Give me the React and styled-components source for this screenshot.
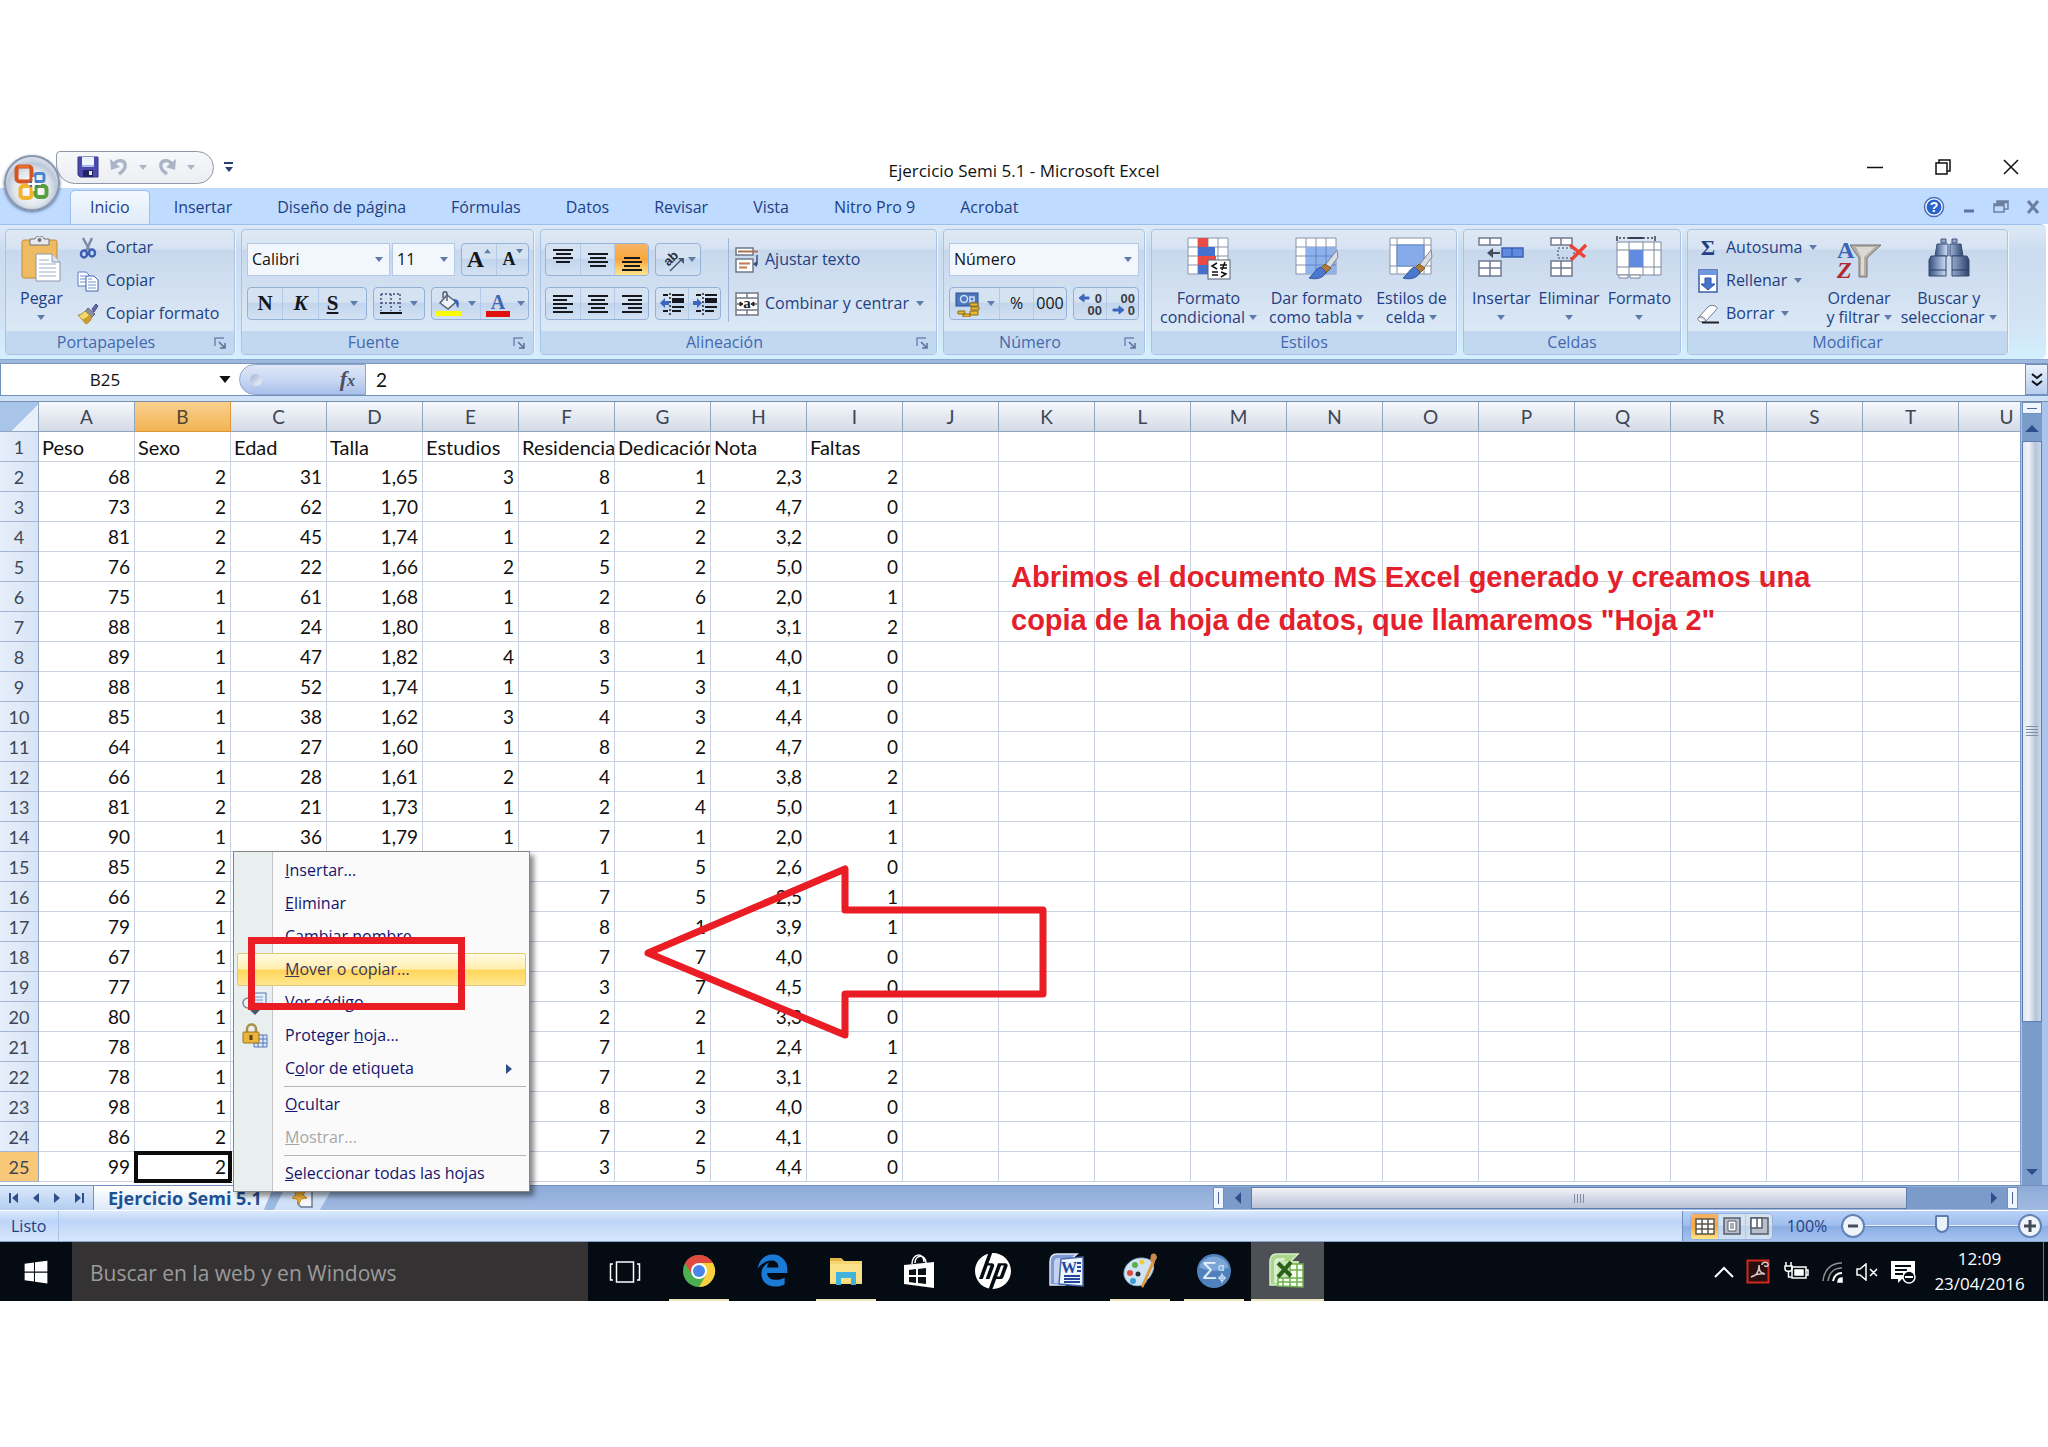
import React from "react";
import styled, { createGlobalStyle, css } from "styled-components";
import { FaEdgeLegacy, FaWindows } from "react-icons/fa";
import { SiHp } from "react-icons/si";

const COLUMNS = "ABCDEFGHIJKLMNOPQRSTU".split("");

const ROWS = [
  ["Peso", "Sexo", "Edad", "Talla", "Estudios", "Residencia", "Dedicación", "Nota", "Faltas"],
  ["68", "2", "31", "1,65", "3", "8", "1", "2,3", "2"],
  ["73", "2", "62", "1,70", "1", "1", "2", "4,7", "0"],
  ["81", "2", "45", "1,74", "1", "2", "2", "3,2", "0"],
  ["76", "2", "22", "1,66", "2", "5", "2", "5,0", "0"],
  ["75", "1", "61", "1,68", "1", "2", "6", "2,0", "1"],
  ["88", "1", "24", "1,80", "1", "8", "1", "3,1", "2"],
  ["89", "1", "47", "1,82", "4", "3", "1", "4,0", "0"],
  ["88", "1", "52", "1,74", "1", "5", "3", "4,1", "0"],
  ["85", "1", "38", "1,62", "3", "4", "3", "4,4", "0"],
  ["64", "1", "27", "1,60", "1", "8", "2", "4,7", "0"],
  ["66", "1", "28", "1,61", "2", "4", "1", "3,8", "2"],
  ["81", "2", "21", "1,73", "1", "2", "4", "5,0", "1"],
  ["90", "1", "36", "1,79", "1", "7", "1", "2,0", "1"],
  ["85", "2", "", "", "", "1", "5", "2,6", "0"],
  ["66", "2", "", "", "", "7", "5", "2,5", "1"],
  ["79", "1", "", "", "", "8", "1", "3,9", "1"],
  ["67", "1", "", "", "", "7", "7", "4,0", "0"],
  ["77", "1", "", "", "", "3", "7", "4,5", "0"],
  ["80", "1", "", "", "", "2", "2", "3,3", "0"],
  ["78", "1", "", "", "", "7", "1", "2,4", "1"],
  ["78", "1", "", "", "", "7", "2", "3,1", "2"],
  ["98", "1", "", "", "", "8", "3", "4,0", "0"],
  ["86", "2", "", "", "", "7", "2", "4,1", "0"],
  ["99", "2", "", "", "", "3", "5", "4,4", "0"]
];

const TABS = [
  "Inicio",
  "Insertar",
  "Diseño de página",
  "Fórmulas",
  "Datos",
  "Revisar",
  "Vista",
  "Nitro Pro 9",
  "Acrobat"
];

const UI_FONT = `"Open Sans", "Noto Sans", sans-serif`;
const CELL_FONT = `Lato, "Open Sans", sans-serif`;

/* ---------- icons ---------- */

const Caret = ({ color = "#5f7ba8", size = 8 }) => (
  <svg width={size} height={size / 2 + 1} viewBox="0 0 8 5" aria-hidden="true">
    <path d="M0 0h8L4 5z" fill={color} />
  </svg>
);

const OfficeLogo = () => (
  <svg width="36" height="38" viewBox="0 0 36 38" fill="none" aria-hidden="true">
    <rect x="2.500" y="2.500" width="15" height="15" rx="3" stroke="#d8531e" strokeWidth="4" />
    <path d="M4 2.500h11" stroke="#e8772e" strokeWidth="2" />
    <rect x="21" y="9.500" width="9" height="8" rx="2" stroke="#4a86d0" strokeWidth="3" />
    <rect x="6.500" y="22" width="11" height="12" rx="3" stroke="#f3b42c" strokeWidth="4" />
    <rect x="21.500" y="22" width="11" height="11" rx="3" stroke="#5a9e3c" strokeWidth="4" />
    <path d="M14 20h13M19.500 13v14" stroke="#fff" strokeWidth="2" />
    <path d="M16 18h2M22 18h2M16 22h2M22 22h2" stroke="#4469a8" strokeWidth="2" />
  </svg>
);

const SaveIcon = () => (
  <svg width="22" height="22" viewBox="0 0 22 22" aria-hidden="true">
    <path d="M1 1h20v20H3l-2-2z" fill="#4a49ad" stroke="#34348c" />
    <rect x="5" y="1" width="12" height="10" fill="#eef2fb" />
    <path d="M5 9h12v2H5z" fill="#a9bbe8" />
    <rect x="6" y="14" width="10" height="7" fill="#22225e" />
    <rect x="12" y="15" width="3" height="4" fill="#e6e8f5" />
  </svg>
);

const UndoIcon = ({ flip }) => (
  <svg width="20" height="20" viewBox="0 0 20 20" fill="none" aria-hidden="true">
    <g transform={flip ? "translate(20 0) scale(-1 1)" : undefined}>
      <path d="M5 8C8 1 18 3 16 10c-.6 3-3 5-6 7" stroke="#a9b4c6" strokeWidth="3.500" />
      <path d="M1 2l1 11 9-3z" fill="#a9b4c6" />
    </g>
  </svg>
);

const PasteIcon = () => (
  <svg width="42" height="46" viewBox="0 0 42 46" aria-hidden="true">
    <rect x="2" y="4" width="35" height="38" rx="2" fill="#eebb62" stroke="#c08e3d" />
    <path d="M10 3h5c0-4 9-4 9 0h5v6H10z" fill="#e8eaee" stroke="#6d7480" />
    <circle cx="19.500" cy="4" r="2" fill="#6d7480" />
    <path d="M16 18h16l8 8v19H16z" fill="#fff" stroke="#8d97a8" />
    <path d="M32 18v8h8" fill="#dde5f2" stroke="#8d97a8" />
    <path d="M19 24h10M19 28h17M19 32h17M19 36h17M19 40h17" stroke="#9fb0cc" />
  </svg>
);

const CutIcon = () => (
  <svg width="22" height="22" viewBox="0 0 22 22" fill="none" aria-hidden="true">
    <path d="M6 1l7 13M15 1L9 14" stroke="#7d8ba3" strokeWidth="2.500" />
    <ellipse cx="7" cy="17" rx="3" ry="3.500" stroke="#3c5fb4" strokeWidth="2.500" />
    <ellipse cx="15" cy="16" rx="3" ry="3.500" stroke="#3c5fb4" strokeWidth="2.500" />
  </svg>
);

const CopyIcon = () => (
  <svg width="22" height="22" viewBox="0 0 22 22" aria-hidden="true">
    <path d="M1 2h8l3 3v11H1z" fill="#fff" stroke="#5a7fc0" />
    <path d="M3 6h6M3 9h6M3 12h6" stroke="#6f93d2" />
    <path d="M9 6h8l4 4v11H9z" fill="#fff" stroke="#3f63ae" />
    <path d="M11 12h8M11 15h8M11 18h8M11 9h4" stroke="#6f93d2" />
  </svg>
);

const BrushIcon = () => (
  <svg width="22" height="22" viewBox="0 0 22 22" aria-hidden="true">
    <path d="M15 6l4-5 2 2-4 6z" fill="#6269a8" stroke="#454b86" />
    <path d="M11 5l7 6-3 3-7-5z" fill="#8b8fa8" stroke="#5b5f7c" />
    <path d="M8 8l7 6c-1 4-4 6-6 7L1 12c3 0 5-2 7-4z" fill="#f4d86e" stroke="#a98b2f" />
    <path d="M9 21l-4-5c3 0 5-2 7-4l3 2c-1 4-4 6-6 7z" fill="#c99b35" />
  </svg>
);

const BordersIcon = () => (
  <svg width="22" height="22" viewBox="0 0 22 22" aria-hidden="true">
    <path
      d="M1 1h20M1 10h20M1 1v17M11 1v17M20 1v17"
      stroke="#41507a"
      strokeWidth="1.500"
      strokeDasharray="2 2"
      fill="none"
    />
    <path d="M0 20h22" stroke="#111" strokeWidth="2" />
  </svg>
);

const FillIcon = () => (
  <svg width="26" height="26" viewBox="0 0 26 26" aria-hidden="true">
    <path d="M11 4l9 7-8 7-8-6z" fill="#eef3fa" stroke="#59616f" strokeWidth="1.500" />
    <path d="M11 10V3c0-3-4-3-4 0v4" fill="none" stroke="#59616f" strokeWidth="1.500" />
    <path d="M18 8c5 0 6 4 4 9-2-1-1-5-4-6z" fill="#3e64b8" />
    <rect x="0" y="20" width="25" height="5" fill="#fbfb00" />
  </svg>
);

const FontColorIcon = () => (
  <svg width="26" height="26" viewBox="0 0 26 26" aria-hidden="true">
    <text x="13" y="18" textAnchor="middle" fontFamily="Liberation Serif" fontWeight="700" fontSize="20" fill="#4565b0">
      A
    </text>
    <rect x="1" y="20" width="24" height="6" fill="#e01010" />
  </svg>
);

const LinesIcon = ({ lines, height = 20 }) => (
  <svg width="22" height={height} viewBox={`0 0 22 ${height}`} aria-hidden="true">
    {lines.map(([x, y, w]) => (
      <rect key={y} x={x} y={y} width={w} height="2" fill="#16181d" />
    ))}
  </svg>
);

const alignTop = [[1, 0, 20], [4, 4, 15], [1, 8, 20], [4, 12, 14]];
const alignMiddle = [[1, 4, 20], [3, 8, 16], [1, 12, 20], [3, 16, 16]];
const alignBottom = [[3, 8, 16], [1, 12, 20], [3, 16, 16], [1, 20, 20]];
const paragraph = (xs) => xs.map(([x, w], i) => [x, i * 4, w]);
const alignLeft = paragraph([[1, 20], [1, 14], [1, 20], [1, 14], [1, 20]]);
const alignCenter = paragraph([[1, 20], [4, 14], [1, 20], [4, 14], [1, 20]]);
const alignRight = paragraph([[1, 20], [7, 14], [1, 20], [7, 14], [1, 20]]);

const OrientationIcon = () => (
  <svg width="26" height="26" viewBox="0 0 26 26" aria-hidden="true">
    <text
      x="1"
      y="14"
      transform="translate(3 1) rotate(-45 9 11)"
      fontFamily="Liberation Sans"
      fontWeight="700"
      fontSize="13"
      fill="#2c2f38"
    >
      ab
    </text>
    <path d="M10 24L22 12" stroke="#4d5568" strokeWidth="1.500" />
    <path d="M18 11h6v6z" fill="#4d5568" />
  </svg>
);

const IndentIcon = ({ right }) => (
  <svg width="24" height="22" viewBox="0 0 24 22" aria-hidden="true">
    <path d="M10 0v22" stroke="#222" strokeWidth="1.500" strokeDasharray="2 2" />
    <path d="M3 2h5M12 2h12M3 18h5M12 18h9M12 14h12" stroke="#16181d" strokeWidth="2" />
    <path d="M12 5h12v5H12z" fill="#16181d" />
    <path d={right ? "M9 10L4 5v3H0v4h4v3z" : "M0 10l5-5v3h4v4H5v3z"} fill="#3f66bf" />
  </svg>
);

const WrapIcon = () => (
  <svg width="24" height="26" viewBox="0 0 24 26" aria-hidden="true">
    <rect x="1" y="1" width="17" height="7" fill="#fff" stroke="#6f7787" strokeWidth="1.500" />
    <path d="M3 4.500h20" stroke="#a8745a" strokeWidth="2" />
    <rect x="1" y="12" width="17" height="13" fill="#fff" stroke="#6f7787" strokeWidth="1.500" />
    <path d="M4 16.500h11M4 20.500h8" stroke="#c47a4f" strokeWidth="2" />
    <path d="M22 8v9h-3" stroke="#3a4d80" fill="none" strokeWidth="1.500" />
    <path d="M18 17l4-3v6z" fill="#3a4d80" />
  </svg>
);

const MergeIcon = () => (
  <svg width="24" height="24" viewBox="0 0 24 24" aria-hidden="true">
    <path d="M1 1h22v22H1zM1 6h22M1 18h22M12 1v5M12 18v5" fill="#fff" stroke="#6f7787" strokeWidth="1.500" />
    <text x="12" y="16" textAnchor="middle" fontFamily="Liberation Serif" fontWeight="700" fontSize="15" fill="#222">
      a
    </text>
    <path d="M2 12h5M22 12h-5M5 10l3 2-3 2zM19 10l-3 2 3 2z" stroke="#222" fill="#222" />
  </svg>
);

const CurrencyIcon = () => (
  <svg width="26" height="26" viewBox="0 0 26 26" aria-hidden="true">
    <rect x="1" y="2" width="22" height="13" fill="#4d76bd" stroke="#2f4f92" />
    <circle cx="9" cy="8" r="3.500" fill="none" stroke="#cfe0f8" strokeWidth="1.500" />
    <path d="M15 12V6h4v4h-4" fill="none" stroke="#cfe0f8" strokeWidth="1.500" />
    <path d="M15 12h8v3h-8zM16 16h8v3h-8zM15 20h8v4h-8zM3 20h7v3H3zM8 23h7v3H8z" fill="#e9b832" stroke="#8f6a14" />
  </svg>
);

const DecimalIcon = ({ more }) => (
  <svg width="26" height="26" viewBox="0 0 26 26" aria-hidden="true">
    <g fontFamily="Liberation Sans" fontWeight="700" fontSize="13" fill="#3a3d45" textAnchor="end">
      <text x="25" y="12">{more ? "0" : "00"}</text>
      <text x="25" y="24">{more ? "00" : "0"}</text>
    </g>
    <path
      d={more ? "M2 7l5-4v3h5v2H7v3z" : "M14 19l-5-4v3H3v2h6v3z"}
      fill="#3f66bf"
      stroke="#3f66bf"
    />
  </svg>
);

const GridBase = ({ fill }) => (
  <path d="M2 2h40v36H2zM12 2v36M22 2v36M32 2v36M2 11h40M2 20h40M2 29h40" fill={fill || "#fff"} stroke="#8893a8" />
);

const PaintBrush = () => (
  <g>
    <path d="M43 14L28 33l5 3 11-15z" fill="#d9dce2" stroke="#7f8592" />
    <path d="M31 28l-5 5 5 5 6-6z" fill="#b07b35" stroke="#7b541f" />
    <path d="M27 31c-5 1-7 7-12 11 7 2 15 0 17-6z" fill="#4a78cc" stroke="#3158a4" />
  </g>
);

const ConditionalIcon = () => (
  <svg width="46" height="44" viewBox="0 0 46 44" aria-hidden="true">
    <GridBase />
    <path d="M12 2h10v9H12zM12 20h18v9H12z" fill="#ea4b45" />
    <path d="M12 11h17v9H12zM12 29h10v9H12z" fill="#4471cc" />
    <rect x="22" y="24" width="22" height="19" fill="#fff" stroke="#596273" />
    <path d="M31 27l-5 3 5 3M26 36h6M26 39h6M34 29h7M34 32h7M39 26l-3 8M35 36l5 2-5 3" fill="none" stroke="#111" strokeWidth="1.500" />
  </svg>
);

const TableFormatIcon = () => (
  <svg width="46" height="44" viewBox="0 0 46 44" aria-hidden="true">
    <GridBase />
    <path d="M12 11h30v27H12z" fill="#8fb2ea" />
    <path d="M22 11v27M32 11v27M12 20h30M12 29h30" stroke="#5f86cc" />
    <PaintBrush />
  </svg>
);

const CellStylesIcon = () => (
  <svg width="46" height="44" viewBox="0 0 46 44" aria-hidden="true">
    <path d="M2 2h41v36H2zM9 2v36M36 2v36M2 9h41M2 30h41" fill="#fff" stroke="#8893a8" />
    <path d="M9 9h27v21H9z" fill="#86abe8" stroke="#5f86cc" />
    <PaintBrush />
  </svg>
);

const InsertCellsIcon = () => (
  <svg width="46" height="44" viewBox="0 0 46 44" aria-hidden="true">
    <path d="M1 2h22v7H1zM12 2v7M1 25h22v15H1zM12 25v15M1 32h22" fill="#fff" stroke="#6f7a90" strokeWidth="1.500" />
    <path d="M24 12h21v9H24zM34 12v9" fill="#5f8ae0" stroke="#3b62b4" strokeWidth="1.500" />
    <path d="M11 17h11" stroke="#444c5e" strokeWidth="2" />
    <path d="M9 17l6-5v10z" fill="#444c5e" />
  </svg>
);

const DeleteCellsIcon = () => (
  <svg width="40" height="44" viewBox="0 0 40 44" aria-hidden="true">
    <path d="M2 2h21v7H2zM12 2v7M2 25h21v15H2zM12 25v15M2 32h21" fill="#fff" stroke="#6f7a90" strokeWidth="1.500" />
    <path d="M9 12h16v10H9z" fill="none" stroke="#333d52" strokeDasharray="2 2" />
    <path d="M21 9l15 12M37 9L22 24" stroke="#ea4335" strokeWidth="3.500" />
  </svg>
);

const FormatCellsIcon = () => (
  <svg width="46" height="44" viewBox="0 0 46 44" aria-hidden="true">
    <path d="M1 0v5M39 0v5" stroke="#333d52" strokeWidth="1.500" />
    <path d="M3 2h36" stroke="#333d52" strokeWidth="1.500" strokeDasharray="2 2" />
    <path d="M13 2h14" stroke="#333d52" strokeWidth="2" />
    <path d="M1 6h44v33H1zM13 6v33M27 6v33M38 6v33M1 14h44M1 31h44" fill="#fff" stroke="#7c879c" />
    <path d="M13 14h14v17H13z" fill="#5f8ae0" />
    <path d="M3 39h9v3H3zM14 39h10v3H14z" fill="#fff" stroke="#7c879c" />
  </svg>
);

const FillDownIcon = () => (
  <svg width="20" height="24" viewBox="0 0 20 24" aria-hidden="true">
    <rect x="1" y="1" width="18" height="22" fill="#fff" stroke="#3c5fa8" strokeWidth="1.500" />
    <rect x="1" y="1" width="18" height="5" fill="#6f97dc" />
    <path d="M7 9h6v6h4l-7 6-7-6h4z" fill="#4773cc" stroke="#2c51a0" />
  </svg>
);

const EraserIcon = () => (
  <svg width="22" height="20" viewBox="0 0 22 20" aria-hidden="true">
    <path d="M1 14L11 3c2-2 4-2 7-1s2 3 1 4L9 17c-2 2-9 1-8-3z" fill="#fff" stroke="#6f7a90" />
    <path d="M1 14c2-2 6-2 8 3" fill="#d6dbe6" stroke="#6f7a90" />
    <path d="M5 18.500h17" stroke="#222" strokeWidth="2" />
  </svg>
);

const SortIcon = () => (
  <svg width="46" height="46" viewBox="0 0 46 46" aria-hidden="true">
    <path d="M14 9h31L31 22v19h-8V22z" fill="#b3aea6" stroke="#77736d" />
    <path d="M20 11h19L28 21v18h-3V21z" fill="#dcd9d3" />
    <g fontFamily="Liberation Serif" fontWeight="700" fontSize="24">
      <text x="1" y="22" fill="#3a62b8">A</text>
      <text x="1" y="42" fill="#b02a30" fontStyle="italic">Z</text>
    </g>
  </svg>
);

const FindIcon = () => (
  <svg width="44" height="46" viewBox="0 0 44 46" aria-hidden="true">
    <defs>
      <linearGradient id="lens" x1="0" x2="1">
        <stop offset="0" stopColor="#35507f" />
        <stop offset=".4" stopColor="#c4d4ee" />
        <stop offset="1" stopColor="#2b4370" />
      </linearGradient>
    </defs>
    <path d="M14 3h5v4h-5zM25 3h5v4h-5z" fill="#8ea3c6" stroke="#47597c" />
    <path d="M10 8h11v12H8zM23 8h11l2 12H23z" fill="url(#lens)" stroke="#3a5078" />
    <path d="M4 20h15v20H2V24zM25 20h15l2 4v16H25z" fill="url(#lens)" stroke="#33486e" />
    <path d="M3 34h16M25 34h17" stroke="#2c3f63" />
  </svg>
);

const LauncherIcon = () => (
  <svg width="12" height="12" viewBox="0 0 12 12" aria-hidden="true">
    <path d="M1 9V1h9" fill="none" stroke="#6c87b5" strokeWidth="1.500" />
    <path d="M5 5l5 5M11 6v5H6" fill="none" stroke="#5a6f96" strokeWidth="1.500" />
  </svg>
);

const HelpIcon = () => (
  <svg width="22" height="22" viewBox="0 0 22 22" aria-hidden="true">
    <circle cx="11" cy="11" r="9.500" fill="#fff" stroke="#4a6fb8" strokeWidth="1.500" />
    <circle cx="11" cy="11" r="7.500" fill="#2c62cc" />
    <text x="11" y="16" textAnchor="middle" fontFamily="Liberation Sans" fontWeight="700" fontSize="14" fill="#fff">
      ?
    </text>
  </svg>
);

const LockSheetIcon = () => (
  <svg width="26" height="26" viewBox="0 0 26 26" aria-hidden="true">
    <path d="M12 12h13v12H12zM12 16h13M12 20h13M16 12v12M21 12v12" fill="#dbe7f9" stroke="#5676b4" />
    <path d="M5 9V6c0-6 9-6 9 0v3" fill="none" stroke="#a99049" strokeWidth="2.500" />
    <rect x="1" y="9" width="16" height="11" rx="1" fill="#e9b53c" stroke="#9a7420" />
    <path d="M9 12v5" stroke="#5b4310" strokeWidth="3" />
  </svg>
);

const CodeIcon = () => (
  <svg width="26" height="26" viewBox="0 0 26 26" aria-hidden="true">
    <rect x="7" y="3" width="17" height="13" fill="#e7effb" stroke="#5676b4" />
    <path d="M13 7h8M13 10h8M13 13h8" stroke="#7b93c4" />
    <circle cx="6" cy="13" r="5" fill="#eef1f6" stroke="#7d8798" strokeWidth="1.500" />
    <path d="M8 20l6-4 4 4-5 5z" fill="#4b566c" />
  </svg>
);

const NewSheetIcon = () => (
  <svg width="24" height="22" viewBox="0 0 24 22" aria-hidden="true">
    <path d="M6 4h14v16H9l-3-3z" fill="#f6f8fc" stroke="#6b7892" strokeWidth="1.500" />
    <path d="M7 1l2 4 5-2-3 5 4 3-6 1-2 5-2-5-5-1 4-3-2-5 4 2z" fill="#f0b33a" stroke="#c68a1d" />
  </svg>
);

const ChromeIcon = () => (
  <svg width="34" height="34" viewBox="0 0 34 34" aria-hidden="true">
    <circle cx="17" cy="17" r="16" fill="#4caf50" />
    <path d="M3.100 9A16 16 0 0 1 30.900 9L17 9.500 10 21z" fill="#e04a3f" />
    <path d="M30.900 9A16 16 0 0 1 17 33l7-12-7-12z" fill="#fbce3c" />
    <circle cx="17" cy="17" r="8" fill="#fff" />
    <circle cx="17" cy="17" r="6" fill="#4a86e8" />
  </svg>
);

const ExplorerIcon = () => (
  <svg width="34" height="30" viewBox="0 0 34 30" aria-hidden="true">
    <path d="M1 2h11l3 3h18v23H1z" fill="#f6d673" />
    <path d="M1 2h11l3 3H1z" fill="#e3b64a" />
    <path d="M1 8h32v18H1z" fill="#fbe08a" />
    <path d="M7 16h20v13h-5v-7h-10v7H7z" fill="#3fb3dd" />
  </svg>
);

const StoreIcon = () => (
  <svg width="34" height="36" viewBox="0 0 34 36" aria-hidden="true">
    <path d="M2 12l30-3v26L2 31z" fill="#fff" />
    <path d="M10 11C10 0 22-1 22 9M13 10c0-9 11-9 11 0" fill="none" stroke="#fff" strokeWidth="1.500" />
    <path d="M7 17l7-1v6H7zM16 16l8-1v7h-8zM7 24h7v6l-7-1zM16 24h8v7l-8-1z" fill="#0b1016" />
  </svg>
);

const WordIcon = () => (
  <svg width="36" height="36" viewBox="0 0 36 36" aria-hidden="true">
    <path d="M1 32V9c0-5 2-8 7-8h20l-7 6-5 25z" fill="#7f9bd6" stroke="#dfe8f8" strokeWidth="1.500" />
    <path d="M5 30V11c0-4 1-6 5-6h8l-7 25z" fill="#c3d2f0" />
    <path d="M12 6l22-2v29l-24-2z" fill="#f1f5fc" stroke="#4a6bb0" strokeWidth="1.500" />
    <text x="12" y="20" fontFamily="Liberation Serif" fontWeight="700" fontSize="16" fill="#23479b">
      W
    </text>
    <path d="M15 23h16M15 26h16M15 29h16M28 10h4M28 14h4M28 18h4" stroke="#23479b" strokeWidth="2" />
  </svg>
);

const PaintIcon = () => (
  <svg width="36" height="36" viewBox="0 0 36 36" aria-hidden="true">
    <path d="M2 22C1 12 11 4 21 5s13 7 9 15-4 4-6 9-19 7-22-7z" fill="#cfe3f3" stroke="#8fb0cb" />
    <circle cx="8" cy="20" r="3" fill="#df4e3c" />
    <circle cx="13" cy="12" r="3" fill="#5fae4d" />
    <circle cx="20" cy="9" r="2.500" fill="#f0ca3d" />
    <circle cx="11" cy="28" r="3" fill="#3c9fd4" />
    <circle cx="16" cy="21" r="2.500" fill="#26313d" />
    <path d="M30 8l3 1-12 26-2-2z" fill="#e09b45" />
    <path d="M29 2c3-3 6-1 6 3l-3 5-4-2z" fill="#c98a4b" />
  </svg>
);

const SpssIcon = () => (
  <svg width="36" height="36" viewBox="0 0 36 36" aria-hidden="true">
    <circle cx="18" cy="18" r="17" fill="#4f82bd" />
    <path d="M3 14a16 16 0 0 1 30 0c-9 5-20 5-30 0z" fill="#7ba6d5" />
    <g fill="#e3eefa" fontFamily="Liberation Sans">
      <text x="6" y="26" fontSize="24">Σ</text>
      <text x="22" y="18" fontSize="11">α</text>
    </g>
    <circle cx="26" cy="25" r="2.500" fill="none" stroke="#e3eefa" />
    <path d="M26 20v10M22 25h8" stroke="#e3eefa" />
  </svg>
);

const ExcelIcon = () => (
  <svg width="36" height="36" viewBox="0 0 36 36" aria-hidden="true">
    <path d="M1 32V9c0-5 2-8 7-8h21l-6 6-9 25z" fill="#a8d68c" stroke="#d8efc9" strokeWidth="1.500" />
    <path d="M5 30V11c0-4 1-6 5-6h6L9 30z" fill="#d9efcb" />
    <path d="M10 8h20l-2 16H8z" fill="#c7e6b4" />
    <path d="M21 11h13v23l-25-1v-8h12zM21 17h13M21 25h13M9 29h25M28 11v23M21 25v9M14 25v8" fill="#f7fcf3" stroke="#6db04c" strokeWidth="1.500" />
    <path d="M9 10l13 13M22 9L9 24" stroke="#2c5e1c" strokeWidth="4" />
  </svg>
);

const TaskViewIcon = () => (
  <svg width="32" height="24" viewBox="0 0 32 24" fill="none" stroke="#fff" strokeWidth="1.500" aria-hidden="true">
    <rect x="7.500" y="2" width="17" height="20" />
    <path d="M4 4H1.500v16H4M28 4h2.500v16H28" />
  </svg>
);

/* ---------- base ---------- */

const GlobalStyle = createGlobalStyle`
  * {
    box-sizing: border-box;
  }

  body {
    margin: 0;
    background: #fff;
    font-family: ${UI_FONT};
    font-size: 16px;
    line-height: 19px;
    color: #1e3f83;
  }

  button, input, select {
    margin: 0;
    padding: 0;
    border: none;
    background: none;
    border-radius: 0;
    font: inherit;
    color: inherit;
    outline: none;
  }

  svg {
    display: block;
    flex: none;
  }
`;

const Page = styled.div`
  padding: 146px 0;
`;

const Window = styled.main`
  position: relative;
  display: flex;
  flex-direction: column;
`;

/* ---------- title bar ---------- */

const TitleBar = styled.header`
  display: grid;
  grid-template-columns: 1fr auto 1fr;
  align-items: center;
  height: 42px;
`;

const QuickAccess = styled.div`
  display: flex;
  align-items: center;
  gap: 10px;
  margin-left: 56px;
`;

const QuickPill = styled.div`
  display: flex;
  align-items: center;
  gap: 10px;
  height: 33px;
  width: 158px;
  padding-left: 20px;
  border: 1px solid #8d97a6;
  border-radius: 4px 17px 17px 20px;
  background: linear-gradient(#f7f8fa, #eceef2);
`;

const IconButton = styled.button`
  display: flex;
  align-items: center;
  justify-content: center;
`;

const CustomizeBar = styled(IconButton)`
  flex-direction: column;
  gap: 3px;

  &::before {
    content: "";
    width: 9px;
    height: 2px;
    background: #27406f;
  }
`;

const Title = styled.h1`
  margin: 0;
  font-size: 17px;
  font-weight: 400;
  color: #111;
  padding-top: 6px;
`;

const WindowControls = styled.div`
  display: flex;
  justify-content: flex-end;
  padding-right: 3px;

  button {
    width: 68px;
    height: 40px;
  }
`;

const OfficeButton = styled.button`
  position: absolute;
  left: 4px;
  top: 9px;
  width: 56px;
  height: 56px;
  display: flex;
  align-items: center;
  justify-content: center;
  border: 2px solid #8797ae;
  border-radius: 50%;
  background: radial-gradient(circle at 50% 60%, #fff 10%, #dfe4ec 45%, #bcc8da 60%, #f6f8fb 90%);
  box-shadow: 0 1px 3px #51688f;
`;

/* ---------- ribbon ---------- */

const TabBar = styled.nav`
  display: flex;
  align-items: flex-end;
  gap: 1px;
  height: 36px;
  padding-left: 70px;
  background: #bfdbff;
`;

const RibbonTab = styled.button`
  height: 34px;
  padding: 0 22px;
  white-space: nowrap;

  ${({ $active }) =>
    $active &&
    css`
      padding: 0 19px;
      margin-right: 1px;
      border: 1px solid #9dbfee;
      border-bottom: none;
      border-radius: 5px 5px 0 0;
      background: linear-gradient(#f4f9ff, #dfebf8);
    `}
`;

const BookControls = styled.div`
  display: flex;
  align-items: center;
  gap: 16px;
  height: 34px;
  margin-left: auto;
  padding-right: 7px;
`;

const Ribbon = styled.section`
  display: flex;
  gap: 6px;
  height: 135px;
  padding: 4px 5px 0;
  margin-right: 2px;
  border-top: 1px solid #9dbfee;
  border-radius: 0 6px 6px 0;
  background: linear-gradient(#dde9f6, #cbdcf0 20%, #d2e3f5 70%, #d3f0ff);
`;

const RibbonEdge = styled.div`
  height: 5px;
  border-top: 1px solid #8aa8d3;
  border-bottom: 1px solid #7c96bd;
  background: #9db8de;
`;

const Group = styled.div`
  display: flex;
  flex-direction: column;
  flex: 0 0 ${({ $width }) => $width}px;
  height: 126px;
  border: 1px solid #a9c3e2;
  border-radius: 4px;
  overflow: hidden;
  background: linear-gradient(#dfe9f5 0, #d6e3f2 19px, #c8d8ec 20px, #dbe8f6 100px);
  box-shadow: 1px 0 0 #eef5fc;
`;

const GroupBody = styled.div`
  display: flex;
  flex: 1;
  padding: 0 ${({ $pad = 5 }) => $pad}px;
  gap: ${({ $gap = 8 }) => $gap}px;
`;

const GroupFoot = styled.div`
  display: grid;
  grid-template-columns: ${({ $launcher }) => ($launcher ? "1fr 28px" : "1fr")};
  align-items: center;
  height: 23px;
  background: #c1d8f0;
  color: #4468ad;
  text-align: center;
`;

const BigButton = styled.button`
  display: flex;
  flex-direction: column;
  align-items: center;
  justify-content: space-between;
  height: 97px;
  padding-top: 6px;
  white-space: nowrap;
`;

const BigLabel = styled.span`
  display: flex;
  flex-direction: column;
  align-items: center;
`;

const LabelLine = styled.span`
  display: flex;
  align-items: center;
  justify-content: center;
  gap: 4px;
  height: 19px;
`;

const SmallList = styled.div`
  display: flex;
  flex-direction: column;
  padding-top: 1px;
`;

const SmallButton = styled.button`
  display: flex;
  align-items: center;
  gap: 7px;
  height: 33px;
  white-space: nowrap;
`;

const IconSlot = styled.span`
  display: flex;
  justify-content: center;
  width: 22px;
`;

const ToolRows = styled.div`
  display: flex;
  flex-direction: column;
  gap: 11px;
  padding-top: 13px;
`;

const ToolRow = styled.div`
  display: flex;
  gap: ${({ $gap = 6 }) => $gap}px;
`;

const ToolSet = styled.div`
  display: flex;
  height: 33px;
  border: 1px solid #93b1d9;
  border-radius: 4px;
  overflow: hidden;
  background: linear-gradient(#d5e2f2 45%, #c2d5ec 50%, #d3e2f3);
`;

const Tool = styled.button`
  display: flex;
  align-items: center;
  justify-content: center;
  gap: ${({ $gap = 6 }) => $gap}px;
  width: ${({ $width = 34 }) => $width}px;
  color: #14161b;

  & + & {
    border-left: 1px solid #b3c9e5;
  }

  ${({ $on }) =>
    $on &&
    css`
      background: linear-gradient(#f6b365, #f9a73c 50%, #ffe58a);
    `}
`;

const Letter = styled.span`
  font-family: "Liberation Serif", serif;
  font-weight: 700;
  font-size: ${({ $size = 21 }) => $size}px;
  font-style: ${({ $italic }) => ($italic ? "italic" : "normal")};
  text-decoration: ${({ $under }) => ($under ? "underline" : "none")};
`;

const SizeMark = styled.span`
  align-self: flex-start;
  padding-top: 5px;
  margin-left: -6px;

  svg {
    transform: ${({ $up }) => ($up ? "rotate(180deg)" : "none")};
  }
`;

const Combo = styled.label`
  position: relative;
  width: ${({ $width }) => $width}px;
  height: 33px;
  border: 1px solid #b3c9e5;
  background: #f2f7fd;
  color: #111;

  select {
    appearance: none;
    width: 100%;
    height: 100%;
    padding: 0 24px 0 4px;
  }

  svg {
    position: absolute;
    right: 6px;
    top: 13px;
    pointer-events: none;
  }
`;

const Divider = styled.div`
  width: 1px;
  height: 84px;
  margin-top: 8px;
  background: #9db5d6;
`;

/* ---------- formula bar ---------- */

const FormulaBar = styled.div`
  display: flex;
  height: 31px;
  border-left: 1px solid #6f8fbd;
  background: #fff;
  color: #111;
`;

const NameBox = styled.div`
  display: flex;
  align-items: center;
  width: 238px;
  padding-right: 8px;

  input {
    flex: 1;
    min-width: 0;
    padding-right: 10px;
    font-size: 17px;
    text-align: center;
  }
`;

const FxPill = styled.div`
  display: flex;
  align-items: center;
  justify-content: space-between;
  width: 127px;
  padding: 0 10px;
  border: 1px solid #8fa6cb;
  border-radius: 16px 0 0 16px;
  background: linear-gradient(#dfe8f7, #c9d7f2 50%, #a9c0ea);
`;

const FxKnob = styled.span`
  width: 12px;
  height: 12px;
  border-radius: 50%;
  background: linear-gradient(135deg, #9fb0cf, #f3f6fc);
`;

const FxButton = styled.button`
  font-family: "Liberation Serif", serif;
  font-style: italic;
  font-weight: 700;
  font-size: 22px;
  color: #4a5060;

  sub {
    font-size: 16px;
    vertical-align: baseline;
  }
`;

const FormulaInput = styled.input`
  flex: 1;
  min-width: 0;
  padding-left: 10px;
  font-family: ${CELL_FONT};
  font-size: 19px;
`;

const ExpandButton = styled(IconButton)`
  width: 23px;
  border: 1px solid #6f8fbd;
  background: linear-gradient(#eaf2fd, #b6cdef);
`;

const Strip = styled.div`
  height: 7px;
  border-top: 1px solid #6f8fbd;
  border-bottom: 1px solid #7b8ea8;
  background: #cfe1f7;
`;

/* ---------- sheet ---------- */

const Workspace = styled.section`
  position: relative;
`;

const SheetArea = styled.div`
  display: flex;
  height: 783px;
`;

const Viewport = styled.div`
  flex: 1;
  min-width: 0;
  overflow: hidden;
`;

const Sheet = styled.table`
  table-layout: fixed;
  width: 2055px;
  border-collapse: separate;
  border-spacing: 0;
  font-family: ${CELL_FONT};
  font-size: 19px;
  line-height: 22px;
  color: #111;
`;

const ColHead = styled.th`
  width: ${({ $corner }) => ($corner ? 39 : 96)}px;
  height: 30px;
  padding: 0;
  font-weight: 400;
  color: #3c4654;
  border-right: 1px solid #92a5bf;
  border-bottom: 1px solid #92a5bf;
  background: linear-gradient(#f6f9fc, #e4e9f1 50%, #d5dbe6);

  ${({ $corner }) =>
    $corner &&
    css`
      background: linear-gradient(135deg, #a9c4e9 60%, #e6effa 60%);
    `}

  ${({ $on }) =>
    $on &&
    css`
      color: #51482f;
      border-color: #e0963c;
      background: linear-gradient(#f9d08f, #f2b454);
    `}
`;

const RowHead = styled.th`
  height: 30px;
  padding: 0;
  font-weight: 400;
  font-size: 18px;
  color: #3c4654;
  border-right: 1px solid #92a5bf;
  border-bottom: 1px solid #a4b6d0;
  background: ${({ $on }) => ($on ? "#f8c778" : "linear-gradient(90deg, #e6eefa, #d8e4f5)")};
`;

const Cell = styled.td`
  position: relative;
  height: 30px;
  padding: 0 4px;
  border-right: 1px solid #c9d2e0;
  border-bottom: 1px solid #c9d2e0;
  text-align: right;
  white-space: nowrap;
  overflow: hidden;

  ${({ $text }) =>
    $text &&
    css`
      padding: 0 0 0 3px;
      font-size: 20px;
      text-align: left;
    `}

  ${({ $selected }) =>
    $selected &&
    css`
      outline: 4px solid #0c0c0c;
      outline-offset: -3px;
    `}
`;

const VScroll = styled.div`
  display: flex;
  flex-direction: column;
  width: 28px;
  padding: 0 6px 0 1px;
  background: #a9c5ee;
  border-left: 1px solid #7d9cc9;
`;

const SplitBox = styled.span`
  flex: none;
  width: ${({ $vertical }) => ($vertical ? "auto" : "11px")};
  height: ${({ $vertical }) => ($vertical ? "12px" : "auto")};
  border: 1px solid #6f8fbd;
  background: #eff6ff;
  display: flex;
  align-items: center;
  justify-content: center;

  &::before {
    content: "";
    width: ${({ $vertical }) => ($vertical ? "10px" : "1px")};
    height: ${({ $vertical }) => ($vertical ? "1px" : "12px")};
    background: #4c6696;
  }
`;

const ScrollButton = styled.button`
  flex: none;
  display: flex;
  align-items: center;
  justify-content: center;
  width: ${({ $vertical }) => ($vertical ? "auto" : "27px")};
  height: ${({ $vertical }) => ($vertical ? "27px" : "auto")};
  background: #7b9bcb;
`;

const VTrack = styled.div`
  flex: 1;
  background: #7b9bcb;
`;

const VThumb = styled.div`
  display: flex;
  align-items: center;
  justify-content: center;
  height: 81%;
  border: 1px solid #5d7caf;
  background: linear-gradient(90deg, #dfe6f0, #f1f4fa 30%, #b7c5d8 70%, #cbd8ea);
`;

const Grip = styled.span`
  width: ${({ $vertical }) => ($vertical ? "12px" : "10px")};
  height: ${({ $vertical }) => ($vertical ? "10px" : "9px")};
  background: repeating-linear-gradient(
    ${({ $vertical }) => ($vertical ? "0deg" : "90deg")},
    #7f8da8 0 1px,
    transparent 1px 3px
  );
`;

/* ---------- sheet tabs ---------- */

const SheetTabs = styled.div`
  display: flex;
  height: 26px;
  border-top: 1px solid #6f8fbd;
  border-bottom: 1px solid #fff;
  background: linear-gradient(#8eabd8, #9fbae2);
`;

const SheetNav = styled.div`
  display: flex;
  align-items: center;
  justify-content: space-around;
  width: 94px;
  padding: 0 3px;
  background: linear-gradient(#dbe9fb, #b4cdf0);
  border-right: 1px solid #6f8fbd;
`;

const SheetTab = styled.button`
  padding: 0 12px 0 14px;
  background: linear-gradient(#fff, #dce9fa);
  color: #1d5192;
  font-size: 18px;
  font-weight: 700;
  white-space: nowrap;
  clip-path: polygon(0 0, 100% 0, calc(100% - 10px) 100%, 0 100%);
`;

const NewSheetTab = styled(IconButton)`
  width: 60px;
  background: #cfe0f6;
  clip-path: polygon(12px 0, 100% 0, calc(100% - 14px) 100%, 0 100%);
`;

const HScroll = styled.div`
  display: flex;
  width: calc(41% - 5px);
  margin-left: auto;
  padding: 1px 30px 1px 0;
`;

const HTrack = styled.div`
  flex: 1;
  background: #7b9bcb;
`;

const HThumb = styled.div`
  display: flex;
  align-items: center;
  justify-content: center;
  width: 90%;
  height: 100%;
  border: 1px solid #5d7caf;
  background: linear-gradient(#f3f3f7, #d5dae6 50%, #b9c2d4);
`;

/* ---------- context menu ---------- */

const Menu = styled.div`
  position: absolute;
  left: 233px;
  top: 449px;
  width: 297px;
  padding: 2px 3px 1px;
  border: 1px solid #868686;
  background: linear-gradient(90deg, #e9eeee 38px, #c5c5c5 38px, #c5c5c5 39px, #fafafa 39px);
  box-shadow: 4px 4px 5px rgba(0, 0, 0, 0.45);
`;

const MenuItem = styled.button`
  display: grid;
  grid-template-columns: 36px 1fr 20px;
  align-items: center;
  width: 100%;
  height: 33px;
  text-align: left;
  color: #14146e;
  border: 1px solid transparent;
  border-radius: 2px;

  &:disabled {
    color: #a7a7a7;
  }

  ${({ $hover }) =>
    $hover &&
    css`
      color: #3c3559;
      border-color: #e0c877;
      background: linear-gradient(#fffbe2, #ffeeb0 48%, #ffd65a 52%, #ffe68f);
    `}
`;

const MenuIcon = styled.span`
  display: flex;
  padding-left: 4px;
`;

const MenuLabel = styled.span`
  padding-left: 11px;
`;

const MenuLine = styled.hr`
  height: 1px;
  margin: 1px 0 1px 47px;
  border: none;
  background: #b5b5b5;
`;

/* ---------- annotations ---------- */

const RedBox = styled.div`
  position: absolute;
  left: 248px;
  top: 535px;
  width: 217px;
  height: 73px;
  border: 7px solid #ea1c24;
`;

const RedArrow = styled.svg`
  position: absolute;
  left: 640px;
  top: 459px;
`;

const Note = styled.p`
  position: absolute;
  left: 1011px;
  top: 154px;
  margin: 0;
  font-family: "Liberation Sans Narrow", "Liberation Sans", sans-serif;
  font-weight: 700;
  font-size: 29px;
  line-height: 43px;
  color: #e3202b;
  white-space: nowrap;
`;

/* ---------- status bar ---------- */

const StatusBar = styled.footer`
  display: flex;
  height: 31px;
  background: linear-gradient(#dbe9fd, #bdd5f9 35%, #c8dcf9 60%, #d6e7fd);
  border-bottom: 1px solid #88a4cf;
`;

const StatusText = styled.span`
  display: flex;
  align-items: center;
  width: 59px;
  padding-left: 11px;
  border-right: 1px solid #a9c3ea;
`;

const StatusRight = styled.div`
  display: flex;
  align-items: center;
  width: 366px;
  margin-left: auto;
  padding: 0 6px 0 7px;
  border-left: 1px solid #6f8fbd;
  background: linear-gradient(#b9d2f8, #9dbcec 50%, #8aade3 52%, #a6c4f1);
`;

const ViewSet = styled(ToolSet)`
  height: 27px;

  button {
    width: 27px;
  }
`;

const ZoomValue = styled.button`
  width: 68px;
`;

const RoundButton = styled.button`
  flex: none;
  display: flex;
  align-items: center;
  justify-content: center;
  width: 24px;
  height: 24px;
  border: 2px solid #6382b6;
  border-radius: 50%;
  background: #eff4fb;
`;

const ZoomSlider = styled.input`
  appearance: none;
  flex: 1;
  min-width: 0;
  height: 20px;

  &::-webkit-slider-runnable-track {
    height: 2px;
    background: #e8f1fd;
    border-bottom: 1px solid #6f8fbd;
  }

  &::-webkit-slider-thumb {
    appearance: none;
    width: 14px;
    height: 18px;
    margin-top: -10px;
    border: 2px solid #5d7caf;
    border-radius: 2px 2px 7px 7px;
    background: #eaf1fb;
  }
`;

/* ---------- taskbar ---------- */

const Taskbar = styled.div`
  display: flex;
  height: 59px;
  background: #050b12;
  color: #fff;
`;

const StartButton = styled(IconButton)`
  width: 72px;
`;

const SearchBox = styled.input`
  width: 516px;
  padding: 2px 0 0 18px;
  background: #343233;
  font-size: 21px;

  &::placeholder {
    color: #9b9b9b;
    opacity: 1;
  }
`;

const TaskView = styled(IconButton)`
  width: 74px;
`;

const Apps = styled.div`
  display: flex;
  width: 662px;
`;

const AppButton = styled.button`
  flex: 1;
  display: flex;
  flex-direction: column;
  align-items: center;
  background: ${({ $active }) => ($active ? "#4d5155" : "none")};

  &::after {
    content: "";
    width: ${({ $active }) => ($active ? "100%" : "60px")};
    height: 2px;
    background: ${({ $running }) => ($running ? "#ece6bd" : "none")};
  }
`;

const AppGlyph = styled.span`
  display: flex;
  align-items: center;
  flex: 1;
`;

const Tray = styled.div`
  display: flex;
  align-items: center;
  gap: 12px;
  margin-left: auto;
`;

const Clock = styled.time`
  display: flex;
  flex-direction: column;
  gap: 7px;
  width: 103px;
  font-size: 17px;
  line-height: 18px;
  text-align: center;
`;

const ShowDesktop = styled.button`
  align-self: stretch;
  width: 5px;
  border-left: 1px solid #6f757b;
`;

/* ---------- pieces ---------- */

const RibbonGroup = ({ title, width, launcher, pad, gap, children }) => (
  <Group $width={width}>
    <GroupBody $pad={pad} $gap={gap}>
      {children}
    </GroupBody>
    <GroupFoot $launcher={launcher}>
      <span>{title}</span>
      {launcher && (
        <IconButton aria-label={`Abrir ${title}`}>
          <LauncherIcon />
        </IconButton>
      )}
    </GroupFoot>
  </Group>
);

const BigTool = ({ icon, lines }) => (
  <BigButton>
    {icon}
    <BigLabel>
      <LabelLine>{lines[0]}</LabelLine>
      <LabelLine>
        {lines[1]}
        <Caret />
      </LabelLine>
    </BigLabel>
  </BigButton>
);

const SmallTool = ({ icon, label, caret }) => (
  <SmallButton>
    <IconSlot>{icon}</IconSlot>
    {label}
    {caret && <Caret />}
  </SmallButton>
);

const ComboBox = ({ label, value, width }) => (
  <Combo $width={width}>
    <select aria-label={label} defaultValue={value}>
      <option>{value}</option>
    </select>
    <Caret />
  </Combo>
);

const ArrowGlyph = ({ d }) => (
  <svg width="14" height="14" viewBox="0 0 14 14" aria-hidden="true">
    <path d={d} fill="#2f4f8c" />
  </svg>
);

const menuItems = [
  { key: "I", rest: "nsertar..." },
  { key: "E", rest: "liminar" },
  { key: "C", rest: "ambiar nombre" },
  { key: "M", rest: "over o copiar...", hover: true },
  { key: "V", rest: "er código", icon: <CodeIcon /> },
  { before: "Proteger ", key: "h", rest: "oja...", icon: <LockSheetIcon /> },
  { before: "C", key: "o", rest: "lor de etiqueta", sub: true },
  { line: true },
  { key: "O", rest: "cultar" },
  { key: "M", rest: "ostrar...", disabled: true },
  { line: true },
  { key: "S", rest: "eleccionar todas las hojas" }
];

const apps = [
  { name: "Google Chrome", icon: <ChromeIcon />, running: true },
  { name: "Microsoft Edge", icon: <FaEdgeLegacy size={33} color="#1a7bd6" /> },
  { name: "Explorador de archivos", icon: <ExplorerIcon />, running: true },
  { name: "Tienda", icon: <StoreIcon /> },
  { name: "HP", icon: <SiHp size={36} color="#fff" /> },
  { name: "Word", icon: <WordIcon /> },
  { name: "Paint", icon: <PaintIcon />, running: true },
  { name: "SPSS", icon: <SpssIcon />, running: true },
  { name: "Excel", icon: <ExcelIcon />, running: true, active: true }
];

const ContextMenu = () => (
  <Menu>
    {menuItems.map((item, i) =>
      item.line ? (
        <MenuLine key={i} />
      ) : (
        <MenuItem key={i} $hover={item.hover} disabled={item.disabled}>
          <MenuIcon>{item.icon}</MenuIcon>
          <MenuLabel>
            {item.before}
            <u>{item.key}</u>
            {item.rest}
          </MenuLabel>
          {item.sub && <ArrowGlyph d="M1 2l6 5-6 5z" />}
        </MenuItem>
      )
    )}
  </Menu>
);

const SheetTable = () => (
  <Sheet>
    <thead>
      <tr>
        <ColHead $corner aria-label="Seleccionar todo" />
        {COLUMNS.map((c) => (
          <ColHead key={c} $on={c === "B"}>
            {c}
          </ColHead>
        ))}
      </tr>
    </thead>
    <tbody>
      {ROWS.map((row, r) => (
        <tr key={r}>
          <RowHead $on={r === 24}>{r + 1}</RowHead>
          {COLUMNS.map((c, i) => (
            <Cell key={c} $text={r === 0} $selected={r === 24 && c === "B"}>
              {row[i]}
            </Cell>
          ))}
        </tr>
      ))}
    </tbody>
  </Sheet>
);

const RibbonGroups = () => (
  <Ribbon>
    <RibbonGroup title="Portapapeles" width={230} launcher pad={14} gap={14}>
      <BigTool icon={<PasteIcon />} lines={["Pegar", ""]} />
      <SmallList>
        <SmallTool icon={<CutIcon />} label="Cortar" />
        <SmallTool icon={<CopyIcon />} label="Copiar" />
        <SmallTool icon={<BrushIcon />} label="Copiar formato" />
      </SmallList>
    </RibbonGroup>

    <RibbonGroup title="Fuente" width={293} launcher>
      <ToolRows>
        <ToolRow>
          <ToolRow $gap={2}>
            <ComboBox label="Fuente" value="Calibri" width={143} />
            <ComboBox label="Tamaño de fuente" value="11" width={63} />
          </ToolRow>
          <ToolSet>
            <Tool aria-label="Aumentar tamaño">
              <Letter $size={24}>A</Letter>
              <SizeMark $up>
                <Caret size={7} />
              </SizeMark>
            </Tool>
            <Tool $width={32} aria-label="Disminuir tamaño">
              <Letter $size={18}>A</Letter>
              <SizeMark>
                <Caret size={7} />
              </SizeMark>
            </Tool>
          </ToolSet>
        </ToolRow>
        <ToolRow>
          <ToolSet>
            <Tool>
              <Letter>N</Letter>
            </Tool>
            <Tool $width={36}>
              <Letter $italic>K</Letter>
            </Tool>
            <Tool $width={48} $gap={12}>
              <Letter $under>S</Letter>
              <Caret />
            </Tool>
          </ToolSet>
          <ToolSet>
            <Tool $width={50} $gap={8} aria-label="Bordes">
              <BordersIcon />
              <Caret />
            </Tool>
          </ToolSet>
          <ToolSet>
            <Tool $width={48} aria-label="Color de relleno">
              <FillIcon />
              <Caret />
            </Tool>
            <Tool $width={48} aria-label="Color de fuente">
              <FontColorIcon />
              <Caret />
            </Tool>
          </ToolSet>
        </ToolRow>
      </ToolRows>
    </RibbonGroup>

    <RibbonGroup title="Alineación" width={397} launcher pad={4} gap={7}>
      <ToolRows>
        <ToolRow>
          <ToolSet>
            <Tool aria-label="Alinear arriba">
              <LinesIcon lines={alignTop} height={22} />
            </Tool>
            <Tool aria-label="Alinear en el medio">
              <LinesIcon lines={alignMiddle} height={22} />
            </Tool>
            <Tool $on aria-label="Alinear abajo">
              <LinesIcon lines={alignBottom} height={22} />
            </Tool>
          </ToolSet>
          <ToolSet>
            <Tool $width={44} $gap={2} aria-label="Orientación">
              <OrientationIcon />
              <Caret />
            </Tool>
          </ToolSet>
        </ToolRow>
        <ToolRow>
          <ToolSet>
            <Tool aria-label="Alinear a la izquierda">
              <LinesIcon lines={alignLeft} height={18} />
            </Tool>
            <Tool aria-label="Centrar">
              <LinesIcon lines={alignCenter} height={18} />
            </Tool>
            <Tool aria-label="Alinear a la derecha">
              <LinesIcon lines={alignRight} height={18} />
            </Tool>
          </ToolSet>
          <ToolSet>
            <Tool $width={32} aria-label="Disminuir sangría">
              <IndentIcon />
            </Tool>
            <Tool $width={32} aria-label="Aumentar sangría">
              <IndentIcon right />
            </Tool>
          </ToolSet>
        </ToolRow>
      </ToolRows>
      <Divider />
      <ToolRows>
        <SmallTool icon={<WrapIcon />} label="Ajustar texto" />
        <SmallTool icon={<MergeIcon />} label="Combinar y centrar" caret />
      </ToolRows>
    </RibbonGroup>

    <RibbonGroup title="Número" width={202} launcher>
      <ToolRows>
        <ComboBox label="Formato de número" value="Número" width={190} />
        <ToolRow>
          <ToolSet>
            <Tool $width={49} aria-label="Formato de moneda">
              <CurrencyIcon />
              <Caret />
            </Tool>
            <Tool>%</Tool>
            <Tool $width={33}>000</Tool>
          </ToolSet>
          <ToolSet>
            <Tool $width={32} aria-label="Aumentar decimales">
              <DecimalIcon more />
            </Tool>
            <Tool $width={32} aria-label="Disminuir decimales">
              <DecimalIcon />
            </Tool>
          </ToolSet>
        </ToolRow>
      </ToolRows>
    </RibbonGroup>

    <RibbonGroup title="Estilos" width={306} pad={8} gap={12}>
      <BigTool icon={<ConditionalIcon />} lines={["Formato", "condicional"]} />
      <BigTool icon={<TableFormatIcon />} lines={["Dar formato", "como tabla"]} />
      <BigTool icon={<CellStylesIcon />} lines={["Estilos de", "celda"]} />
    </RibbonGroup>

    <RibbonGroup title="Celdas" width={218} pad={8}>
      <BigTool icon={<InsertCellsIcon />} lines={["Insertar", ""]} />
      <BigTool icon={<DeleteCellsIcon />} lines={["Eliminar", ""]} />
      <BigTool icon={<FormatCellsIcon />} lines={["Formato", ""]} />
    </RibbonGroup>

    <RibbonGroup title="Modificar" width={321} pad={9} gap={9}>
      <SmallList>
        <SmallTool icon={<Letter $size={22}>Σ</Letter>} label="Autosuma" caret />
        <SmallTool icon={<FillDownIcon />} label="Rellenar" caret />
        <SmallTool icon={<EraserIcon />} label="Borrar" caret />
      </SmallList>
      <BigTool icon={<SortIcon />} lines={["Ordenar", "y filtrar"]} />
      <BigTool icon={<FindIcon />} lines={["Buscar y", "seleccionar"]} />
    </RibbonGroup>
  </Ribbon>
);

const App = () => {
  return (
    <Page>
      <GlobalStyle />
      <Window>
        <TitleBar>
          <QuickAccess>
            <QuickPill>
              <IconButton aria-label="Guardar">
                <SaveIcon />
              </IconButton>
              <IconButton aria-label="Deshacer">
                <UndoIcon />
              </IconButton>
              <Caret color="#a9b4c6" />
              <IconButton aria-label="Rehacer">
                <UndoIcon flip />
              </IconButton>
              <Caret color="#a9b4c6" />
            </QuickPill>
            <CustomizeBar aria-label="Personalizar barra">
              <Caret color="#27406f" />
            </CustomizeBar>
          </QuickAccess>
          <Title>Ejercicio Semi 5.1 - Microsoft Excel</Title>
          <WindowControls>
            <IconButton aria-label="Minimizar">
              <svg width="16" height="16" viewBox="0 0 16 16" stroke="#111" strokeWidth="1.500">
                <path d="M0 8.500h16" />
              </svg>
            </IconButton>
            <IconButton aria-label="Restaurar">
              <svg width="16" height="16" viewBox="0 0 16 16" fill="none" stroke="#111" strokeWidth="1.500">
                <path d="M1 4h11v11H1zM4 4V1h11v11h-3" />
              </svg>
            </IconButton>
            <IconButton aria-label="Cerrar">
              <svg width="16" height="16" viewBox="0 0 16 16" stroke="#111" strokeWidth="1.500">
                <path d="M1 1l14 14M15 1L1 15" />
              </svg>
            </IconButton>
          </WindowControls>
        </TitleBar>

        <TabBar>
          {TABS.map((tab, i) => (
            <RibbonTab key={tab} $active={i === 0}>
              {tab}
            </RibbonTab>
          ))}
          <BookControls>
            <IconButton aria-label="Ayuda">
              <HelpIcon />
            </IconButton>
            <IconButton aria-label="Minimizar libro">
              <svg width="16" height="16" viewBox="0 0 16 16">
                <path d="M3 12h10" stroke="#5b76a6" strokeWidth="3" />
              </svg>
            </IconButton>
            <IconButton aria-label="Restaurar libro">
              <svg width="16" height="16" viewBox="0 0 16 16" fill="none" stroke="#6d7f9f" strokeWidth="1.500">
                <path d="M1 5h10v8H1zM1 6.500h10M4 5V2h11v8h-4M4 3.500h11" />
              </svg>
            </IconButton>
            <IconButton aria-label="Cerrar libro">
              <svg width="16" height="16" viewBox="0 0 16 16" stroke="#6d7f9f" strokeWidth="3">
                <path d="M3 2l10 12M13 2L3 14" />
              </svg>
            </IconButton>
          </BookControls>
        </TabBar>

        <RibbonGroups />
        <RibbonEdge />

        <FormulaBar>
          <NameBox>
            <input aria-label="Cuadro de nombres" defaultValue="B25" />
            <IconButton aria-label="Lista de nombres">
              <Caret color="#111" size={12} />
            </IconButton>
          </NameBox>
          <FxPill>
            <FxKnob />
            <FxButton aria-label="Insertar función">
              f<sub>x</sub>
            </FxButton>
          </FxPill>
          <FormulaInput aria-label="Barra de fórmulas" defaultValue="2" />
          <ExpandButton aria-label="Expandir barra de fórmulas">
            <svg width="12" height="14" viewBox="0 0 12 14" fill="none" stroke="#111" strokeWidth="2">
              <path d="M1 1l5 4 5-4M1 8l5 4 5-4" />
            </svg>
          </ExpandButton>
        </FormulaBar>
        <Strip />

        <Workspace>
          <SheetArea>
            <Viewport>
              <SheetTable />
            </Viewport>
            <VScroll>
              <SplitBox $vertical />
              <ScrollButton $vertical aria-label="Subir">
                <ArrowGlyph d="M0 11h14L7 4z" />
              </ScrollButton>
              <VTrack>
                <VThumb>
                  <Grip $vertical />
                </VThumb>
              </VTrack>
              <ScrollButton $vertical aria-label="Bajar">
                <ArrowGlyph d="M1 4h12l-6 6z" />
              </ScrollButton>
            </VScroll>
          </SheetArea>

          <SheetTabs>
            <SheetNav>
              <IconButton aria-label="Primera hoja">
                <ArrowGlyph d="M2 2h2v10H2zM11 2v10L5 7z" />
              </IconButton>
              <IconButton aria-label="Hoja anterior">
                <ArrowGlyph d="M10 2v10L4 7z" />
              </IconButton>
              <IconButton aria-label="Hoja siguiente">
                <ArrowGlyph d="M4 2v10l6-5z" />
              </IconButton>
              <IconButton aria-label="Última hoja">
                <ArrowGlyph d="M3 2v10l6-5zM10 2h2v10h-2z" />
              </IconButton>
            </SheetNav>
            <SheetTab>Ejercicio Semi 5.1</SheetTab>
            <NewSheetTab aria-label="Insertar hoja de cálculo">
              <NewSheetIcon />
            </NewSheetTab>
            <HScroll>
              <SplitBox />
              <ScrollButton aria-label="Izquierda">
                <ArrowGlyph d="M10 1v12L4 7z" />
              </ScrollButton>
              <HTrack>
                <HThumb>
                  <Grip />
                </HThumb>
              </HTrack>
              <ScrollButton aria-label="Derecha">
                <ArrowGlyph d="M4 1v12l6-6z" />
              </ScrollButton>
              <SplitBox />
            </HScroll>
          </SheetTabs>

          <ContextMenu />
          <RedBox />
          <RedArrow width="410" height="180" viewBox="0 0 410 180" aria-hidden="true">
            <path
              d="M8 92L205 8v41h198v84H205v41z"
              fill="none"
              stroke="#ea1c24"
              strokeWidth="7"
              strokeLinejoin="round"
            />
          </RedArrow>
          <Note>
            Abrimos el documento MS Excel generado y creamos una
            <br />
            copia de la hoja de datos, que llamaremos "Hoja 2"
          </Note>
        </Workspace>

        <StatusBar>
          <StatusText>Listo</StatusText>
          <StatusRight>
            <ViewSet>
              <Tool $on aria-label="Normal">
                <svg width="20" height="17" viewBox="0 0 20 17">
                  <path d="M1 1h18v15H1zM1 6h18M1 11h18M7 1v15M13 1v15" fill="#fff" stroke="#5c5648" strokeWidth="1.500" />
                </svg>
              </Tool>
              <Tool aria-label="Diseño de página">
                <svg width="18" height="18" viewBox="0 0 18 18">
                  <path d="M1 1h16v16H1z" fill="#b9bfca" stroke="#555c6a" strokeWidth="1.500" />
                  <path d="M5 4h8v10H5zM7 7h4M7 9h4M7 11h4" fill="#fff" stroke="#555c6a" />
                </svg>
              </Tool>
              <Tool aria-label="Vista previa de salto de página">
                <svg width="19" height="18" viewBox="0 0 19 18">
                  <path d="M1 1h17v16H1z" fill="#b9bfca" stroke="#555c6a" strokeWidth="1.500" />
                  <path d="M1 1h6v10H1zM7 1h5v10H7z" fill="#fff" stroke="#555c6a" strokeWidth="1.500" />
                </svg>
              </Tool>
            </ViewSet>
            <ZoomValue>100%</ZoomValue>
            <RoundButton aria-label="Alejar">
              <svg width="12" height="12" viewBox="0 0 12 12">
                <path d="M1 6h10" stroke="#444c5c" strokeWidth="3" />
              </svg>
            </RoundButton>
            <ZoomSlider type="range" aria-label="Zoom" min="0" max="100" defaultValue="50" />
            <RoundButton aria-label="Acercar">
              <svg width="14" height="14" viewBox="0 0 14 14">
                <path d="M1 7h12M7 1v12" stroke="#444c5c" strokeWidth="3" />
              </svg>
            </RoundButton>
          </StatusRight>
        </StatusBar>

        <Taskbar>
          <StartButton aria-label="Inicio">
            <FaWindows size={26} />
          </StartButton>
          <SearchBox aria-label="Buscar" placeholder="Buscar en la web y en Windows" />
          <TaskView aria-label="Vista de tareas">
            <TaskViewIcon />
          </TaskView>
          <Apps>
            {apps.map((app) => (
              <AppButton key={app.name} aria-label={app.name} $running={app.running} $active={app.active}>
                <AppGlyph>{app.icon}</AppGlyph>
              </AppButton>
            ))}
          </Apps>
          <Tray>
            <IconButton aria-label="Mostrar iconos ocultos">
              <svg width="20" height="12" viewBox="0 0 20 12" fill="none" stroke="#fff" strokeWidth="2">
                <path d="M1 11l9-9 9 9" />
              </svg>
            </IconButton>
            <IconButton aria-label="Acrobat">
              <svg width="26" height="26" viewBox="0 0 26 26" fill="none">
                <path d="M1.500 1.500h21v22h-21z" fill="#2a0f10" stroke="#d3281e" strokeWidth="2" />
                <path d="M5 18c5-1 8-5 8-12 0 7 2 8 6 9-5-1-9 0-14 3zM16 6c0-3 5-4 6-1s-4 3-3 1" stroke="#d6c6c6" strokeWidth="1.500" />
              </svg>
            </IconButton>
            <IconButton aria-label="Batería">
              <svg width="26" height="22" viewBox="0 0 26 22" fill="none" stroke="#fff" strokeWidth="1.500">
                <path d="M2 1v4M7 1v4M1 5h7v3c0 3-7 3-7 0zM4.500 10v6h3" />
                <path d="M8 6h14v11H8zM22 9h2v5h-2" />
                <path d="M11 9h8v5h-8z" fill="#fff" />
              </svg>
            </IconButton>
            <IconButton aria-label="Red">
              <svg width="22" height="22" viewBox="0 0 22 22" fill="none" stroke="#8d9399" strokeWidth="1.500">
                <path d="M1 20C2 9 9 2 20 2M6 20C7 12 12 7 20 7" />
                <path d="M11 20c1-5 4-8 9-8" stroke="#fff" strokeWidth="2" />
                <path d="M16 21c0-3 2-4 4-4v4z" fill="#fff" stroke="#fff" />
              </svg>
            </IconButton>
            <IconButton aria-label="Volumen">
              <svg width="22" height="18" viewBox="0 0 22 18" fill="none" stroke="#fff" strokeWidth="1.500">
                <path d="M1 6h3l6-5v16l-6-5H1zM14 6l7 7M21 6l-7 7" />
              </svg>
            </IconButton>
            <IconButton aria-label="Notificaciones">
              <svg width="26" height="26" viewBox="0 0 26 26">
                <path d="M1 2h24v18H12l-4 4v-4H1z" fill="#fff" />
                <path d="M5 7h16M5 11h12M5 15h8" stroke="#050b12" strokeWidth="2" />
                <circle cx="19" cy="18" r="6" fill="#050b12" stroke="#fff" strokeWidth="1.500" />
                <path d="M15 18h8" stroke="#fff" strokeWidth="2" />
              </svg>
            </IconButton>
            <Clock>
              <span>12:09</span>
              <span>23/04/2016</span>
            </Clock>
            <ShowDesktop aria-label="Mostrar escritorio" />
          </Tray>
        </Taskbar>

        <OfficeButton aria-label="Botón de Office">
          <OfficeLogo />
        </OfficeButton>
      </Window>
    </Page>
  );
};

export default App;
